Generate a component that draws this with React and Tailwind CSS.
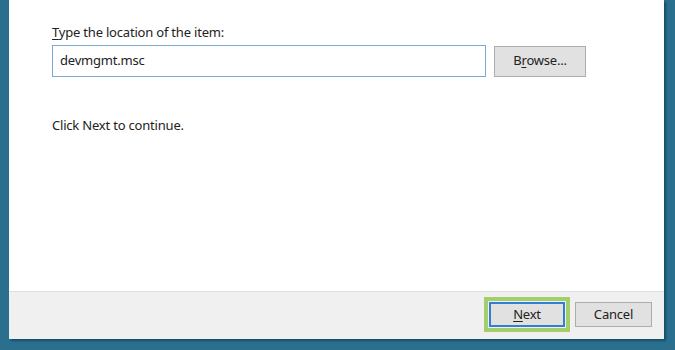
import React from 'react';

const font = { fontFamily: '"Noto Sans", "Open Sans", sans-serif' };

export default function App() {
  return (
    <div className="w-[675px] h-[350px] bg-[#2a6f8d] flex overflow-hidden" style={font}>
      <div className="ml-[9px] w-[655px] h-[339px] bg-white flex flex-col shadow-[2px_2px_2px_rgba(0,40,60,0.45)]">
        {/* Body */}
        <div className="flex-1 pl-[43px] pt-[23px] text-[13px] text-[#222]">
          <div className="leading-[18px] tracking-[-0.2px]">
            <span className="underline underline-offset-2">T</span>ype the location of the item:
          </div>
          <div className="flex items-center gap-[8px] mt-[4px]">
            <div className="w-[434px] h-[32px] border border-[#7aa9d6] flex items-center px-[7px] text-[13px] tracking-[-0.2px]">
              devmgmt.msc
            </div>
            <button className="w-[92px] h-[31px] bg-[#e1e1e1] border border-[#adadad] text-[13px] tracking-[-0.2px]">
              B<span className="underline underline-offset-2">r</span>owse...
            </button>
          </div>
          <div className="mt-[39px] leading-[18px] tracking-[-0.2px]">Click Next to continue.</div>
        </div>
        {/* Footer */}
        <div className="h-[48px] bg-[#f0f0f0] border-t border-[#dfdfdf] flex justify-end items-start pt-[10px] pr-[12px] gap-[10px] text-[13px] text-[#222]">
          <button className="w-[76px] h-[25px] bg-[#e1e1e1] border-2 border-[#2f7fd3] outline-[4px] outline-solid outline-[#a4cd6b] outline-offset-[1px] tracking-[-0.2px]">
            <span className="underline underline-offset-2">N</span>ext
          </button>
          <button className="w-[77px] h-[25px] bg-[#e1e1e1] border border-[#adadad] tracking-[-0.2px]">
            Cancel
          </button>
        </div>
      </div>
    </div>
  );
}
